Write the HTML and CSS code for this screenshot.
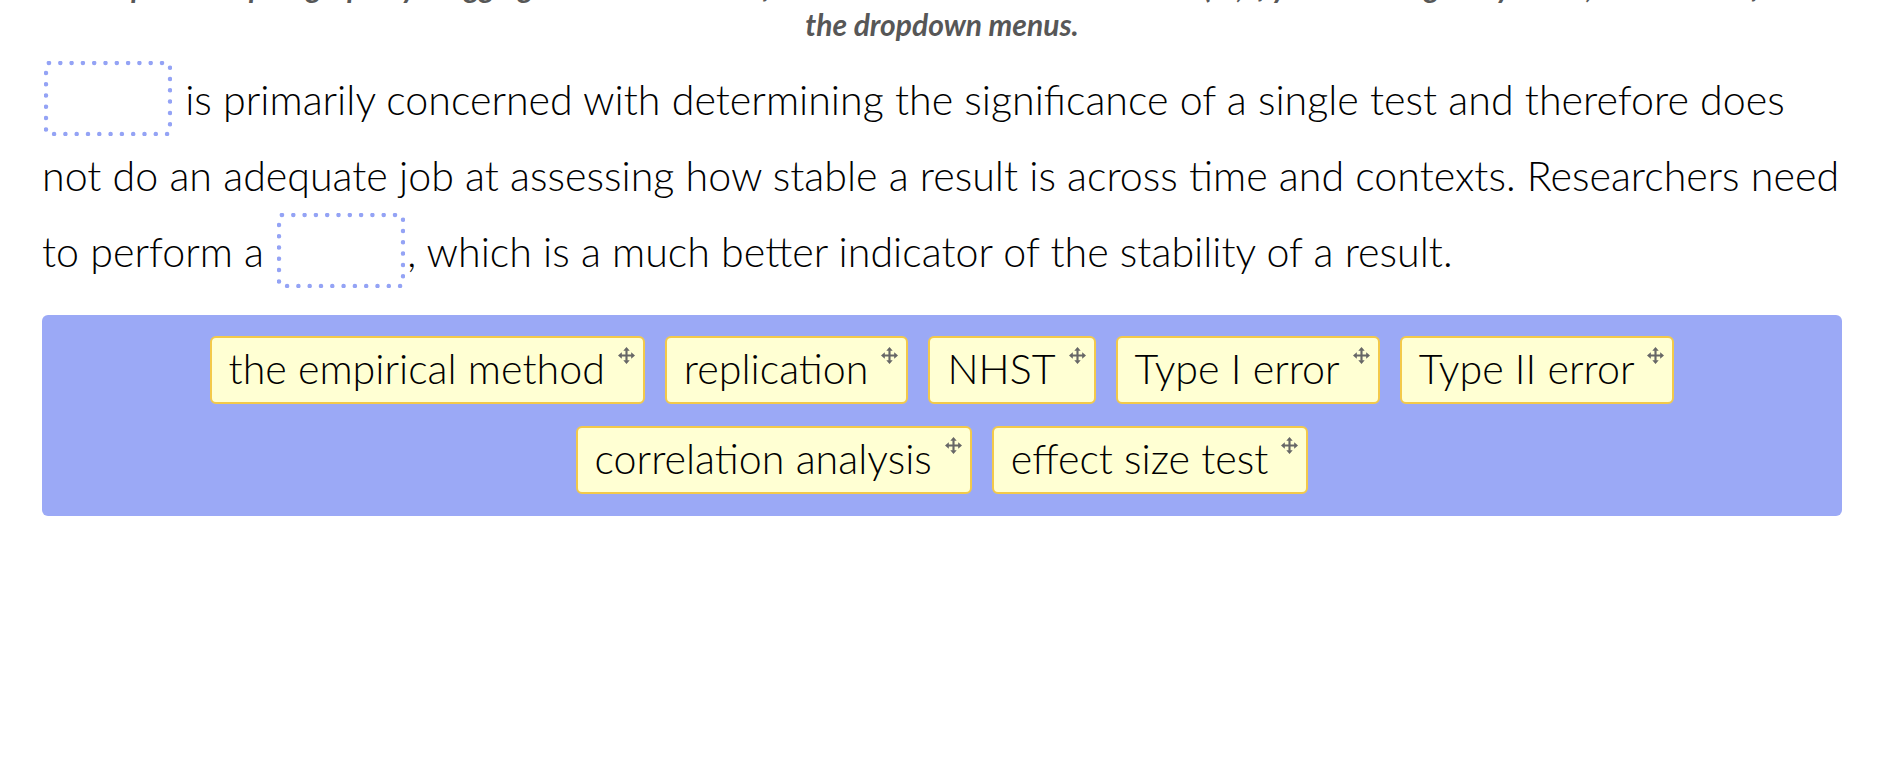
FILE: index.html
```html
<!DOCTYPE html>
<html lang="en">
<head>
<meta charset="utf-8">
<title>Drag and drop</title>
<link rel="stylesheet" href="styles.css">
</head>
<body>
<main class="activity">
  <p class="instructions">Complete the paragraph by dragging the correct terms from the box below into the blanks (or, if you are using a keyboard, select them from<br>the dropdown menus.</p>
  <p class="passage"><span class="blank"><svg width="128" height="75" viewBox="0 0 128 75"><rect x="2" y="2" width="124" height="71" rx="3" /></svg></span> is primarily concerned with determining the significance of a single test and therefore does not do an adequate job at assessing how stable a result is across time and contexts. Researchers need to perform a <span class="blank"><svg width="128" height="75" viewBox="0 0 128 75"><rect x="2" y="2" width="124" height="71" rx="3" /></svg></span>, which is a much better indicator of the stability of a result.</p>
  <div class="bank">
    <span class="term">the empirical method<svg class="grip" viewBox="0 0 16 16"><path d="M8 3v10M3 8h10"/><path class="head" d="M8 0l3 3.6H5zM8 16l3-3.6H5zM0 8l3.6-3v6zM16 8l-3.6-3v6z"/></svg></span>
    <span class="term">replication<svg class="grip" viewBox="0 0 16 16"><path d="M8 3v10M3 8h10"/><path class="head" d="M8 0l3 3.6H5zM8 16l3-3.6H5zM0 8l3.6-3v6zM16 8l-3.6-3v6z"/></svg></span>
    <span class="term">NHST<svg class="grip" viewBox="0 0 16 16"><path d="M8 3v10M3 8h10"/><path class="head" d="M8 0l3 3.6H5zM8 16l3-3.6H5zM0 8l3.6-3v6zM16 8l-3.6-3v6z"/></svg></span>
    <span class="term">Type I error<svg class="grip" viewBox="0 0 16 16"><path d="M8 3v10M3 8h10"/><path class="head" d="M8 0l3 3.6H5zM8 16l3-3.6H5zM0 8l3.6-3v6zM16 8l-3.6-3v6z"/></svg></span>
    <span class="term">Type II error<svg class="grip" viewBox="0 0 16 16"><path d="M8 3v10M3 8h10"/><path class="head" d="M8 0l3 3.6H5zM8 16l3-3.6H5zM0 8l3.6-3v6zM16 8l-3.6-3v6z"/></svg></span>
    <span class="term">correlation analysis<svg class="grip" viewBox="0 0 16 16"><path d="M8 3v10M3 8h10"/><path class="head" d="M8 0l3 3.6H5zM8 16l3-3.6H5zM0 8l3.6-3v6zM16 8l-3.6-3v6z"/></svg></span>
    <span class="term">effect size test<svg class="grip" viewBox="0 0 16 16"><path d="M8 3v10M3 8h10"/><path class="head" d="M8 0l3 3.6H5zM8 16l3-3.6H5zM0 8l3.6-3v6zM16 8l-3.6-3v6z"/></svg></span>
  </div>
</main>
</body>
</html>
```

FILE: styles.css
```css
html, body {
  margin: 0;
  padding: 0;
  background: #ffffff;
}

body {
  font-family: "Lato", "Liberation Sans", sans-serif;
  color: #000000;
  overflow: hidden;
}

.activity {
  width: 1800px;
  margin-left: 42px;
}

.instructions {
  margin: -33px 0 0 0;
  font-size: 30px;
  line-height: 38px;
  font-weight: 700;
  font-style: italic;
  color: #575757;
  text-align: center;
}

.passage {
  margin: 18px 0 0 0;
  font-size: 41.2px;
  line-height: 76px;
  font-weight: 300;
}

.blank {
  display: inline-block;
  width: 128px;
  height: 75px;
  margin: 0 2px;
  vertical-align: -21px;
}

.blank svg {
  display: block;
}

.blank rect {
  fill: none;
  stroke: #94a3f5;
  stroke-width: 4.5;
  stroke-linecap: round;
  stroke-dasharray: 0 11.3;
}

.bank {
  margin-top: 26px;
  background: #9ba9f6;
  border-radius: 6px;
  padding: 21px 21px 22px;
  display: flex;
  flex-wrap: wrap;
  justify-content: center;
  gap: 22px 20px;
}

.term {
  display: inline-flex;
  align-items: flex-start;
  background: #ffffd3;
  border: 2px solid #f3c94a;
  border-radius: 6px;
  padding: 5px 8px 9px 17px;
  font-size: 41.2px;
  line-height: 50px;
  font-weight: 300;
  color: #000000;
}

.grip {
  width: 17px;
  height: 17px;
  margin: 4px 0 0 13px;
  flex: none;
}

.grip path {
  fill: none;
  stroke: #666666;
  stroke-width: 2;
}

.grip path.head {
  fill: #666666;
  stroke: none;
}
```
